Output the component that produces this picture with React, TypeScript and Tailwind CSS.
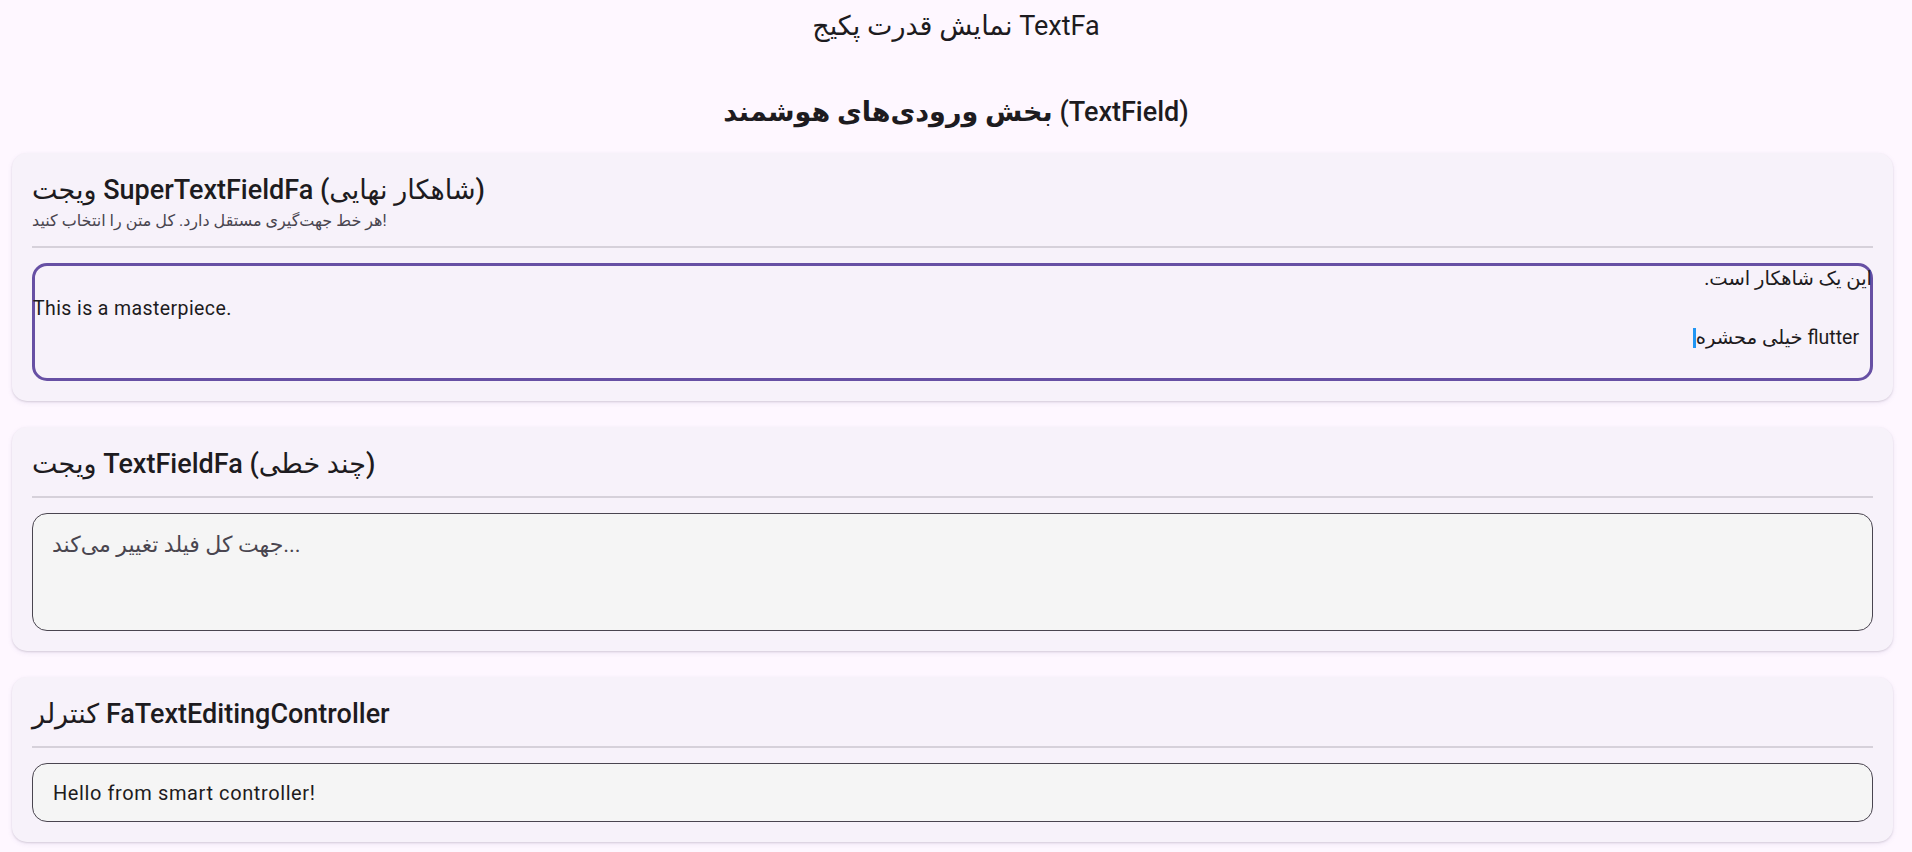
const Card = ({
  title,
  subtitle,
  children,
}: {
  title: string;
  subtitle?: string;
  children: React.ReactNode;
}) => (
  <section className="ml-[12px] mr-[19px] rounded-[15px] bg-[#F7F2FA] px-[20px] pt-[20px] pb-[20px] shadow-[0_1px_2px_rgba(0,0,0,0.12),0_2px_5px_rgba(103,80,164,0.10)]">
    <h3 dir="ltr" className="text-[27px] leading-[34px] font-medium text-[#1D1B20]">
      {title}
    </h3>
    {subtitle && (
      <p dir="ltr" className="mt-[4px] text-[16px] leading-[20px] text-[#49454F]">
        {subtitle}
      </p>
    )}
    {/* Divider */}
    <div className="flex h-[32px] items-center">
      <div className="h-[1.5px] w-full bg-[#D6D1DA]" />
    </div>
    {children}
  </section>
);

export default function App() {
  return (
    <div
      className="min-h-[852px] bg-[#FEF7FF] pt-[9px] pb-[10px] text-[#1D1B20]"
      style={{ fontFamily: 'Roboto, "DejaVu Sans", "Noto Sans", sans-serif' }}
    >
      <header dir="ltr" className="text-center text-[27px] leading-[34px] font-normal">
        نمایش قدرت پکیج TextFa
      </header>

      <h2 dir="ltr" className="mt-[52px] text-center text-[27px] leading-[34px] font-bold">
        بخش ورودی‌های هوشمند <span className="font-medium">(TextField)</span>
      </h2>

      <div className="mt-[24px] flex flex-col gap-[26px]">
        <Card
          title="ویجت SuperTextFieldFa (شاهکار نهایی)"
          subtitle="هر خط جهت‌گیری مستقل دارد. کل متن را انتخاب کنید!"
        >
          <div className="h-[118px] rounded-[15px] border-[3px] border-[#6750A4] text-[19.5px] leading-[29.5px]">
            <div dir="rtl" className="-mt-[2px] -mr-[2px] text-right">
              این یک شاهکار است.
            </div>
            <div dir="ltr" className="-ml-[2px] text-left tracking-[0.4px]">
              This is a masterpiece.
            </div>
            <div dir="rtl" className="pr-[11px] text-right">
              flutter خیلی محشره
              <span className="ml-[3px] inline-block h-[20px] w-[2.5px] translate-y-[4px] bg-[#2196F3]" />
            </div>
          </div>
        </Card>

        <Card title="ویجت TextFieldFa (چند خطی)">
          <div className="h-[118px] rounded-[15px] border-[1.2px] border-[#4A4550] bg-[#F5F5F5] px-[19px] pt-[18px]">
            <p dir="ltr" className="text-[22px] leading-[26px] text-[#49454F]">
              جهت کل فیلد تغییر می‌کند...
            </p>
          </div>
        </Card>

        <Card title="کنترلر FaTextEditingController">
          <div className="flex h-[59px] items-center rounded-[15px] border-[1.2px] border-[#4A4550] bg-[#F5F5F5] px-[20px]">
            <span className="text-[20px] leading-[24px] tracking-[0.6px] text-[#1D1B20]">
              Hello from smart controller!
            </span>
          </div>
        </Card>
      </div>
    </div>
  );
}
